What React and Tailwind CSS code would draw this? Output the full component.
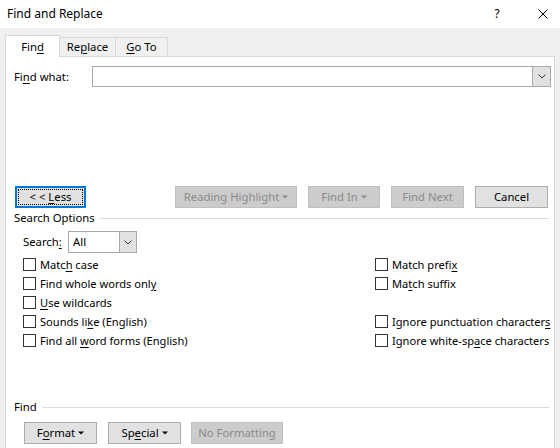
import React from 'react';

const U = ({ children }) => <span className="underline underline-offset-[2px] decoration-[1px]">{children}</span>;

const Caret = ({ color = '#000' }) => (
  <svg width="6" height="4" viewBox="0 0 6 4" className="ml-[3px]">
    <path d="M0 0.5 L6 0.5 L3 3.5 Z" fill={color} />
  </svg>
);

const Chevron = () => (
  <svg width="8" height="5" viewBox="0 0 8 5">
    <path d="M0.5 0.5 L4 4 L7.5 0.5" fill="none" stroke="#333" strokeWidth="1" />
  </svg>
);

const Btn = ({ children, disabled, focused, className = '' }) => {
  if (focused) {
    return (
      <div className={`relative h-[22px] flex items-center justify-center bg-[#e1e1e1] border-2 border-[#0078d7] ${className}`}>
        <span className="absolute inset-[1px] border border-dotted border-black" />
        {children}
      </div>
    );
  }
  return (
    <div
      className={`h-[22px] flex items-center justify-center whitespace-nowrap border ${
        disabled ? 'bg-[#cccccc] border-[#bfbfbf] text-[#8a8a8a]' : 'bg-[#e1e1e1] border-[#adadad]'
      } ${className}`}
    >
      {children}
    </div>
  );
};

const Check = ({ children }) => (
  <div className="h-[19px] flex items-center gap-[4px] whitespace-nowrap">
    <span className="w-[13px] h-[13px] border border-[#333] bg-white shrink-0" />
    <span>{children}</span>
  </div>
);

const GroupLabel = ({ children }) => (
  <div className="h-[16px] flex items-center gap-[5px] pr-[2px]">
    <span>{children}</span>
    <span className="flex-1 h-px bg-[#dcdcdc]" />
  </div>
);

export default function App() {
  return (
    <div className="w-[560px] h-[448px] bg-[#f0f0f0] flex flex-col text-[11.3px] leading-[16px] text-black overflow-hidden font-['Noto_Sans',sans-serif]">
      {/* title bar */}
      <div className="h-[28px] shrink-0 bg-white flex items-center pl-[7px] pr-[7px]">
        <span className="text-[12px]">Find and Replace</span>
        <span className="ml-auto w-[20px] text-center text-[12px]">?</span>
        <span className="ml-[26px] w-[20px] flex justify-center">
          <svg width="10" height="10" viewBox="0 0 10 10">
            <path d="M0.5 0.5 L9.5 9.5 M9.5 0.5 L0.5 9.5" stroke="#000" strokeWidth="1" />
          </svg>
        </span>
      </div>

      {/* tabs */}
      <div className="h-[28px] shrink-0 flex items-end pl-[5px]">
        <div className="relative z-10 -mb-px w-[55px] h-[22px] bg-white border border-[#d9d9d9] border-b-0 flex items-center justify-center">
          Fin<U>d</U>
        </div>
        <div className="w-[56px] h-[19px] border border-[#d9d9d9] border-l-0 border-b-0 flex items-center justify-center">
          Re<U>p</U>lace
        </div>
        <div className="w-[52px] h-[19px] border border-[#d9d9d9] border-l-0 border-b-0 flex items-center justify-center">
          <U>G</U>o To
        </div>
      </div>

      {/* panel */}
      <div className="flex-1 ml-[5px] w-[550px] bg-white border border-[#d9d9d9] border-b-0 flex flex-col pl-[8px] pr-[3px]">
        <div className="mt-[9px] flex items-center h-[21px]">
          <span className="w-[78px]">
            Fi<U>n</U>d what:
          </span>
          <div className="flex-1 h-[21px] border border-[#a9a9a9] flex justify-end">
            <div className="w-[18px] bg-[#e1e1e1] border-l border-[#a9a9a9] flex items-center justify-center">
              <Chevron />
            </div>
          </div>
        </div>

        <div className="mt-[99px] flex pr-[2px]">
          <Btn focused className="ml-[1px] w-[71px]">
            <span className="whitespace-pre">{'< < '}</span>
            <U>L</U>ess
          </Btn>
          <Btn disabled className="ml-[89px] w-[122px]">
            Reading Highlight
            <Caret color="#8a8a8a" />
          </Btn>
          <Btn disabled className="ml-[11px] w-[72px]">
            Find In
            <Caret color="#8a8a8a" />
          </Btn>
          <Btn disabled className="ml-[11px] w-[73px]">
            Find Next
          </Btn>
          <Btn className="ml-[11px] w-[73px]">Cancel</Btn>
        </div>

        <div className="mt-[2px]">
          <GroupLabel>Search Options</GroupLabel>
        </div>

        <div className="mt-[5px] pl-[9px] flex items-center">
          <span className="w-[45px]">
            Search<U>:</U>
          </span>
          <div className="w-[69px] h-[22px] border border-[#a9a9a9] flex">
            <span className="flex-1 pl-[4px] flex items-center">All</span>
            <div className="w-[17px] bg-[#e1e1e1] border-l border-[#a9a9a9] flex items-center justify-center">
              <Chevron />
            </div>
          </div>
        </div>

        <div className="mt-[2px] pl-[9px] grid grid-cols-[352px_1fr] text-[11.1px]">
          <Check>
            Matc<U>h</U> case
          </Check>
          <Check>
            Match prefi<U>x</U>
          </Check>
          <Check>
            Find whole words onl<U>y</U>
          </Check>
          <Check>
            Ma<U>t</U>ch suffix
          </Check>
          <Check>
            <U>U</U>se wildcards
          </Check>
          <div className="h-[19px]" />
          <Check>
            Sounds li<U>k</U>e (English)
          </Check>
          <Check>
            Ignore punctuation character<U>s</U>
          </Check>
          <Check>
            Find all <U>w</U>ord forms (English)
          </Check>
          <Check>
            Ignore white-sp<U>a</U>ce characters
          </Check>
        </div>

        <div className="mt-auto pb-[4px]">
          <GroupLabel>Find</GroupLabel>
          <div className="mt-[7px] flex pl-[10px]">
            <Btn className="w-[73px] h-[21px]">
              F<U>o</U>rmat
              <Caret />
            </Btn>
            <Btn className="ml-[11px] w-[73px]">
              Sp<U>e</U>cial
              <Caret />
            </Btn>
            <Btn disabled className="ml-[10px] w-[92px]">
              No Formatting
            </Btn>
          </div>
        </div>
      </div>
    </div>
  );
}
